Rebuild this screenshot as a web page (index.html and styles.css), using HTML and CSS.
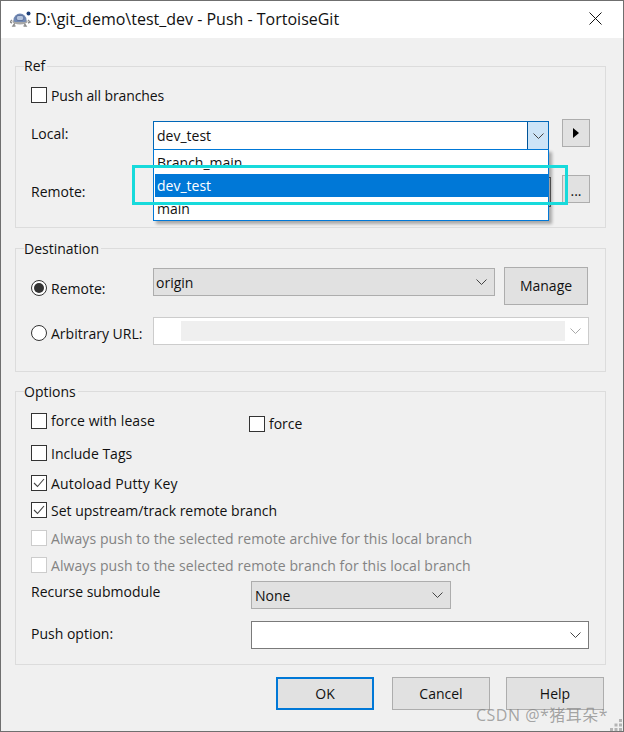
FILE: index.html
```html
<!DOCTYPE html>
<html lang="en">
<head>
    <meta charset="UTF-8">
    <meta name="viewport" content="width=device-width, initial-scale=1.0">
    <title>Push - TortoiseGit</title>
    <link rel="stylesheet" href="styles.css">
</head>
<body>
    <div class="window">
        <div class="titlebar">
            <svg class="app-icon" width="22" height="18" viewBox="0 0 22 18">
                <path d="M2 10l-2 2 2 1M18 10l2 2-2 1M5 13l-2 3h2.500M14 13l2 3h-2.500" stroke="#8c8c8c" stroke-width="1.400" fill="none"/>
                <ellipse cx="10" cy="11.500" rx="7.500" ry="3" fill="#a8a8a8"/>
                <path d="M3.500 10a6.500 6.500 0 0 1 13 0l-1 2h-11z" fill="#7189b4"/>
                <path d="M7.500 5.500h5l1.500 2.500-1.500 2.500h-5L6 8z" fill="#b4c3dc" stroke="#4a5f8c" stroke-width=".7"/>
                <circle cx="18.500" cy="3.500" r="2" fill="#1e3f78"/>
            </svg>
            <span class="title-text">D:\git_demo\test_dev - Push - TortoiseGit</span>
            <svg class="close-icon" width="13" height="13" viewBox="0 0 13 13">
                <path d="M.5.5l12 12M12.500.5l-12 12" stroke="#111" stroke-width="1" fill="none"/>
            </svg>
        </div>

        <div class="content">
            <section class="group group-ref">
                <span class="group-title">Ref</span>
                <div class="check-row check-push-all">
                    <span class="check"></span>
                    <span>Push all branches</span>
                </div>
                <div class="ref-row ref-local">
                    <span class="ref-label">Local:</span>
                    <div class="combo combo-open">
                        <span class="combo-value">dev_test</span>
                        <span class="combo-arrow">
                            <svg width="11" height="6" viewBox="0 0 11 6"><path d="M.5.500l5 5 5-5" stroke="#444" fill="none"/></svg>
                        </span>
                        <ul class="dropdown">
                            <li>Branch_main</li>
                            <li class="selected">dev_test</li>
                            <li>main</li>
                        </ul>
                    </div>
                    <button class="btn btn-small btn-arrow"><span class="triangle"></span></button>
                </div>
                <div class="ref-row ref-remote">
                    <span class="ref-label">Remote:</span>
                    <div class="combo combo-hidden"></div>
                    <button class="btn btn-small btn-dots">...</button>
                </div>
            </section>

            <section class="group group-dest">
                <span class="group-title">Destination</span>
                <div class="dest-row dest-remote">
                    <div class="radio-label">
                        <span class="radio radio-on"></span>
                        <span>Remote:</span>
                    </div>
                    <div class="select select-origin">
                        <span>origin</span>
                        <svg width="11" height="6" viewBox="0 0 11 6"><path d="M.5.500l5 5 5-5" stroke="#444" fill="none"/></svg>
                    </div>
                    <button class="btn btn-manage">Manage</button>
                </div>
                <div class="dest-row dest-url">
                    <div class="radio-label">
                        <span class="radio"></span>
                        <span>Arbitrary URL:</span>
                    </div>
                    <div class="url-combo">
                        <span class="url-field"></span>
                        <svg width="11" height="6" viewBox="0 0 11 6"><path d="M.5.500l5 5 5-5" stroke="#a8a8a8" fill="none"/></svg>
                    </div>
                </div>
            </section>

            <section class="group group-options">
                <span class="group-title">Options</span>
                <div class="force-row">
                    <div class="check-row check-lease">
                        <span class="check"></span>
                        <span>force with lease</span>
                    </div>
                    <div class="check-row check-force">
                        <span class="check"></span>
                        <span>force</span>
                    </div>
                </div>
                <div class="check-row check-tags">
                    <span class="check"></span>
                    <span>Include Tags</span>
                </div>
                <div class="check-row check-putty">
                    <span class="check check-on">
                        <svg width="12" height="10" viewBox="0 0 12 10"><path d="M1 5l3.500 3.500L11 1" stroke="#444" stroke-width="1.100" fill="none"/></svg>
                    </span>
                    <span>Autoload Putty Key</span>
                </div>
                <div class="check-row check-upstream">
                    <span class="check check-on">
                        <svg width="12" height="10" viewBox="0 0 12 10"><path d="M1 5l3.500 3.500L11 1" stroke="#444" stroke-width="1.100" fill="none"/></svg>
                    </span>
                    <span>Set upstream/track remote branch</span>
                </div>
                <div class="check-row disabled check-archive">
                    <span class="check"></span>
                    <span>Always push to the selected remote archive for this local branch</span>
                </div>
                <div class="check-row disabled check-branch">
                    <span class="check"></span>
                    <span>Always push to the selected remote branch for this local branch</span>
                </div>
                <div class="opt-row opt-recurse">
                    <span class="opt-label">Recurse submodule</span>
                    <div class="select select-none">
                        <span>None</span>
                        <svg width="11" height="6" viewBox="0 0 11 6"><path d="M.5.500l5 5 5-5" stroke="#444" fill="none"/></svg>
                    </div>
                </div>
                <div class="opt-row opt-push">
                    <span class="opt-label">Push option:</span>
                    <div class="push-combo">
                        <svg width="11" height="6" viewBox="0 0 11 6"><path d="M.5.500l5 5 5-5" stroke="#444" fill="none"/></svg>
                    </div>
                </div>
            </section>

            <div class="actions">
                <button class="btn btn-action btn-default">OK</button>
                <button class="btn btn-action">Cancel</button>
                <button class="btn btn-action btn-help">Help</button>
            </div>
        </div>

        <div class="highlight"></div>
        <div class="watermark">CSDN @*猪耳朵*</div>
        <svg class="grip" width="12" height="12" viewBox="0 0 12 12">
            <path d="M9 0h3v3H9zM4.500 4.500h3v3h-3zM9 4.500h3v3H9zM0 9h3v3H0zM4.500 9h3v3h-3zM9 9h3v3H9z" fill="#b4b4b4"/>
        </svg>
    </div>
</body>
</html>
```

FILE: styles.css
```css
* {
    box-sizing: border-box;
    margin: 0;
    padding: 0;
}

body {
    background-color: #f0f0f0;
    font-family: "Open Sans", "Noto Sans CJK SC", sans-serif;
    font-size: 14px;
    color: #111;
}

.window {
    position: relative;
    width: 624px;
    height: 732px;
    border: 1px solid #6f6f6f;
    background-color: #f0f0f0;
    overflow: hidden;
}

.titlebar {
    display: flex;
    align-items: center;
    height: 37px;
    padding: 0 21px 2px 9px;
    background-color: #fff;
}

.app-icon {
    margin-right: 3px;
}

.title-text {
    flex: 1;
    font-size: 16px;
}

.content {
    padding: 28px 17px 0 14px;
}

.group {
    position: relative;
    border: 1px solid #dcdcdc;
    padding-left: 15px;
}

.group-title {
    position: absolute;
    top: -10px;
    left: 8px;
    height: 18px;
    padding: 0 2px 0 0;
    line-height: 18px;
    background-color: #f0f0f0;
}

.group-dest .group-title,
.group-options .group-title {
    top: -9px;
}

.group-ref {
    height: 162px;
    padding-top: 19px;
}

.group-dest {
    height: 124px;
    margin-top: 20px;
    padding-top: 18px;
}

.group-options {
    height: 274px;
    margin-top: 19px;
    padding-top: 20px;
}

.check-row {
    display: flex;
    align-items: center;
    gap: 4px;
    height: 18px;
}

.check-push-all {
    letter-spacing: -0.1px;
}

.check {
    display: flex;
    align-items: center;
    justify-content: center;
    width: 16px;
    height: 16px;
    border: 1px solid #333;
    background-color: #fff;
}

.disabled {
    color: #838383;
    letter-spacing: 0.08px;
}

.disabled .check {
    border-color: #ccc;
}

.ref-row {
    display: flex;
    align-items: flex-start;
}

.ref-label {
    width: 122px;
}

.ref-local {
    margin-top: 15px;
}

.ref-local .ref-label {
    margin-top: 5px;
}

.ref-remote {
    margin-top: 24px;
}

.ref-remote .ref-label {
    margin-top: 7px;
}

.combo {
    position: relative;
    display: flex;
    align-items: center;
    justify-content: space-between;
    width: 396px;
    height: 30px;
    margin-top: 2px;
    margin-right: 13px;
    background-color: #fff;
    border: 1px solid #0067b8;
    padding-left: 3px;
}

.combo-value {
    margin-top: -2px;
}

.combo-arrow {
    display: flex;
    align-items: center;
    justify-content: center;
    width: 21px;
    height: 28px;
    background-color: #cce4f7;
    border-left: 1px solid #005499;
}

.combo-hidden {
    width: 398px;
    margin-right: 11px;
    background-color: #e1e1e1;
    border-color: #666;
}

.dropdown {
    position: absolute;
    z-index: 2;
    top: 27px;
    left: -1px;
    width: 396px;
    height: 72px;
    padding: 1px 0 1px 1px;
    list-style: none;
    background-color: #fff;
    border: 1px solid #0078d7;
    box-shadow: 3px 3px 3px rgba(0, 0, 0, 0.3);
}

.dropdown li {
    height: 23px;
    padding-left: 2px;
    line-height: 23px;
}

.dropdown .selected {
    background-color: #0078d7;
    color: #fff;
}

.btn {
    border: 1px solid #adadad;
    background-color: #e1e1e1;
    font-family: inherit;
    font-size: inherit;
    color: inherit;
}

.btn-small {
    display: flex;
    align-items: center;
    justify-content: center;
    width: 28px;
    height: 28px;
}

.btn-dots {
    padding-top: 3px;
}

.triangle {
    width: 0;
    height: 0;
    border-top: 5px solid transparent;
    border-bottom: 5px solid transparent;
    border-left: 6px solid #000;
}

.dest-row {
    display: flex;
    align-items: flex-start;
}

.radio-label {
    display: flex;
    align-items: center;
    gap: 4px;
    width: 122px;
    height: 20px;
    flex-shrink: 0;
}

.radio {
    display: flex;
    align-items: center;
    justify-content: center;
    width: 16px;
    height: 16px;
    border: 1px solid #333;
    border-radius: 50%;
    background-color: #fff;
}

.radio-on::after {
    content: "";
    width: 10px;
    height: 10px;
    border-radius: 50%;
    background-color: #333;
}

.select {
    display: flex;
    align-items: center;
    justify-content: space-between;
    height: 28px;
    padding: 0 7px 0 2px;
    background-color: #e1e1e1;
    border: 1px solid #adadad;
}

.dest-remote .radio-label {
    margin-top: 11px;
}

.select-origin {
    width: 342px;
    margin-top: 1px;
    margin-right: 9px;
}

.btn-manage {
    width: 84px;
    height: 38px;
    padding-bottom: 2px;
}

.dest-url {
    margin-top: 12px;
}

.dest-url .radio-label {
    margin-top: 6px;
}

.url-combo {
    display: flex;
    align-items: center;
    justify-content: space-between;
    width: 436px;
    height: 28px;
    padding: 0 7px 0 27px;
    background-color: #fff;
    border: 1px solid #ccc;
}

.url-field {
    width: 384px;
    height: 20px;
    background-color: #efefef;
}

.check-force {
    margin-left: 94px;
    margin-top: 3px;
}

.check-force span:last-child {
    margin-top: -2px;
}

.force-row {
    display: flex;
    align-items: flex-start;
}

.check-lease {
    letter-spacing: 0.1px;
}

.check-lease span:last-child {
    margin-top: -1px;
}

.check-tags {
    margin-top: 11px;
}

.check-putty {
    margin-top: 12px;
    letter-spacing: 0.15px;
}

.check-upstream {
    margin-top: 9px;
}

.check-archive {
    margin-top: 10px;
}

.check-branch {
    margin-top: 9px;
}

.opt-row {
    display: flex;
    align-items: flex-start;
}

.opt-label {
    width: 220px;
}

.opt-recurse {
    margin-top: 6px;
}

.opt-recurse .opt-label {
    margin-top: 2px;
}

.select-none {
    width: 200px;
    margin-top: 1px;
    padding-left: 3px;
}

.opt-push {
    margin-top: 12px;
}

.opt-push .opt-label {
    margin-top: 3px;
}

.push-combo {
    display: flex;
    align-items: center;
    justify-content: flex-end;
    width: 338px;
    height: 28px;
    padding-right: 7px;
    background-color: #fff;
    border: 1px solid #7a7a7a;
}

.actions {
    display: flex;
    margin-top: 12px;
    padding-left: 261px;
}

.btn-action {
    width: 98px;
    height: 33px;
    margin-right: 18px;
}

.btn-default {
    border: 2px solid #0078d7;
}

.btn-action + .btn-help {
    margin-left: -2px;
    margin-right: 0;
}

.highlight {
    position: absolute;
    z-index: 3;
    top: 164px;
    left: 131px;
    width: 436px;
    height: 40px;
    border: 3px solid #17dadb;
}

.watermark {
    position: absolute;
    z-index: 4;
    top: 701px;
    left: 475px;
    font-size: 16px;
    letter-spacing: 0.5px;
    color: rgba(130, 130, 130, 0.7);
}

.grip {
    position: absolute;
    right: 1px;
    bottom: 0;
}
```
